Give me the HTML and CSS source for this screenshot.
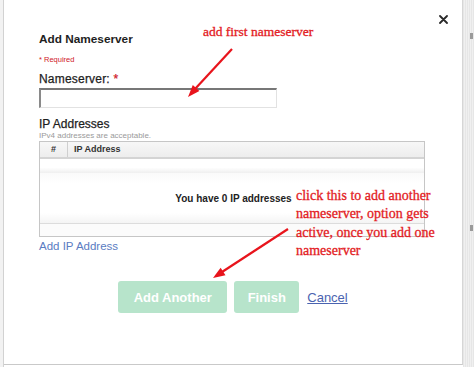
FILE: index.html
```html
<!DOCTYPE html>
<html>
<head>
<meta charset="utf-8">
<link rel="stylesheet" href="styles.css">
</head>
<body>
<div class="page">
  <div class="left-rail"></div>
  <div class="dialog">
    <button class="close" aria-label="Close">
      <svg width="9" height="9" viewBox="0 0 9 9"><path d="M1 1 L8 8 M8 1 L1 8" stroke="#2a2a2a" stroke-width="1.8" stroke-linecap="round"/></svg>
    </button>
    <h2 class="title">Add Nameserver</h2>
    <p class="required">* Required</p>
    <label class="label">Nameserver: <span class="star">*</span></label>
    <input class="input" type="text">
    <h3 class="section">IP Addresses</h3>
    <p class="hint">IPv4 addresses are acceptable.</p>
    <div class="table">
      <div class="thead">
        <div class="th th-hash">#</div>
        <div class="th th-ip">IP Address</div>
      </div>
      <div class="row-empty"></div>
      <div class="msg">You have 0 IP addresses</div>
      <div class="tfoot"></div>
    </div>
    <a class="add-ip" href="#">Add IP Address</a>
    <div class="actions">
      <button class="btn btn-wide">Add Another</button>
      <button class="btn btn-narrow">Finish</button>
      <a class="cancel" href="#">Cancel</a>
    </div>
  </div>
  <div class="right-rail">
    <span class="mark mark1"></span>
    <span class="mark mark2"></span>
  </div>

  <svg class="arrows" width="474" height="367" viewBox="0 0 474 367">
    <line x1="232" y1="49" x2="195" y2="89" stroke="#e8141c" stroke-width="2.2"/>
    <polygon points="188,97 199.4,91.1 192.8,85.1" fill="#e8141c"/>
    <line x1="288" y1="229" x2="222" y2="272" stroke="#e8141c" stroke-width="2.2"/>
    <polygon points="213,278 225.5,275.2 220.6,267.7" fill="#e8141c"/>
  </svg>
  <p class="note note1">add first nameserver</p>
  <p class="note note2">click this to add another<br>nameserver, option gets<br>active, once you add one<br>nameserver</p>
</div>
</body>
</html>
```
FILE: styles.css
```css
html, body {
  margin: 0;
  padding: 0;
  background: #ffffff;
}

.page {
  position: relative;
  width: 474px;
  height: 367px;
  display: flex;
  align-items: flex-start;
  overflow: hidden;
  font-family: "Liberation Sans", Arial, sans-serif;
  color: #222;
}

.left-rail {
  width: 3px;
  height: 367px;
  background: #f2f2f2;
  border-right: 1px solid #d2d2d2;
}

.dialog {
  position: relative;
  box-sizing: border-box;
  width: 459px;
  height: 365px;
  padding: 32px 37px 0 35px;
  border-right: 1px solid #d6d6d6;
  border-bottom: 1px solid #c9c9c9;
  display: flex;
  flex-direction: column;
  align-items: flex-start;
}

.close {
  position: absolute;
  top: 15px;
  right: 14px;
  padding: 0;
  margin: 0;
  border: 0;
  background: none;
  width: 9px;
  height: 9px;
  display: flex;
}

.title {
  margin: 0;
  font-size: 11.8px;
  line-height: 14px;
  font-weight: bold;
  color: #1e1e1e;
}

.required {
  margin: 9px 0 0;
  font-size: 7.5px;
  line-height: 10px;
  color: #d0202a;
}

.label {
  margin-top: 7px;
  font-size: 12px;
  line-height: 15px;
  letter-spacing: 0.2px;
  color: #1e1e1e;
  -webkit-text-stroke: 0.25px #1e1e1e;
}

.star {
  color: #d0202a;
  -webkit-text-stroke: 0.25px #d0202a;
}

.input {
  box-sizing: border-box;
  margin: 1px 0 0;
  width: 238px;
  height: 20px;
  padding: 0;
  border: 1px solid #e2e2e2;
  border-top: 2px solid #777;
  border-left: 2px solid #8a8a8a;
  background: #fff;
}

.section {
  margin: 9px 0 0;
  font-size: 12px;
  line-height: 14px;
  font-weight: normal;
  color: #1e1e1e;
  -webkit-text-stroke: 0.25px #1e1e1e;
}

.hint {
  margin: 0;
  font-size: 8px;
  line-height: 9px;
  color: #9a9a9a;
}

.table {
  box-sizing: border-box;
  margin-top: 1px;
  width: 386px;
  border: 1px solid #c6c6c6;
  display: flex;
  flex-direction: column;
}

.thead {
  display: flex;
  height: 15px;
  background: linear-gradient(#f7f7f7, #ededed);
  border-bottom: 2px solid #d4d4d4;
}

.th {
  font-size: 9px;
  line-height: 15px;
  font-weight: bold;
  color: #333;
}

.th-hash {
  box-sizing: border-box;
  width: 28px;
  text-align: center;
  border-right: 1px solid #cfcfcf;
}

.th-ip {
  padding-left: 6px;
}

.row-empty {
  height: 14px;
  background: linear-gradient(#ffffff 60%, #efefef);
}

.msg {
  height: 50px;
  display: flex;
  align-items: center;
  justify-content: center;
  padding-left: 3px;
  font-size: 10px;
  font-weight: bold;
  color: #222;
  background: linear-gradient(#fafafa, #ffffff 20%, #ffffff 80%, #f4f4f4);
}

.tfoot {
  height: 12px;
  border-top: 1px solid #dcdcdc;
  background: #fbfbfb;
}

.add-ip {
  margin-top: 2px;
  font-size: 11.5px;
  line-height: 14px;
  color: #5a7cc2;
  text-decoration: none;
}

.actions {
  align-self: stretch;
  margin-top: 28px;
  display: flex;
  align-items: center;
  justify-content: center;
  gap: 7px;
  padding-left: 2px;
}

.btn {
  height: 32px;
  border: 0;
  border-radius: 3px;
  background: #b7e4cb;
  color: #ffffff;
  font-family: "Liberation Sans", Arial, sans-serif;
  font-size: 13px;
  font-weight: bold;
  padding: 0;
}

.btn-wide {
  width: 109px;
}

.btn-narrow {
  width: 65px;
}

.cancel {
  margin-left: 1px;
  font-size: 13px;
  color: #4a63b0;
  text-decoration: underline;
}

.right-rail {
  position: relative;
  flex: 1;
  height: 367px;
  background: repeating-linear-gradient(90deg, #e6e6e6 0 1px, #f0f0f0 1px 2px);
}

.mark {
  position: absolute;
  right: 1px;
  width: 3px;
  background: #9a9a9a;
}

.mark1 {
  top: 33px;
  height: 6px;
}

.mark2 {
  top: 225px;
  height: 6px;
}

.arrows {
  position: absolute;
  left: 0;
  top: 0;
  pointer-events: none;
}

.note {
  position: absolute;
  margin: 0;
  font-family: "Liberation Serif", "Times New Roman", serif;
  color: #e31b23;
  white-space: nowrap;
  -webkit-text-stroke: 0.3px #e31b23;
}

.note1 {
  left: 203px;
  top: 24px;
  font-size: 13.5px;
  line-height: 16px;
}

.note2 {
  left: 296px;
  top: 187px;
  font-size: 14px;
  line-height: 18.4px;
}
```
